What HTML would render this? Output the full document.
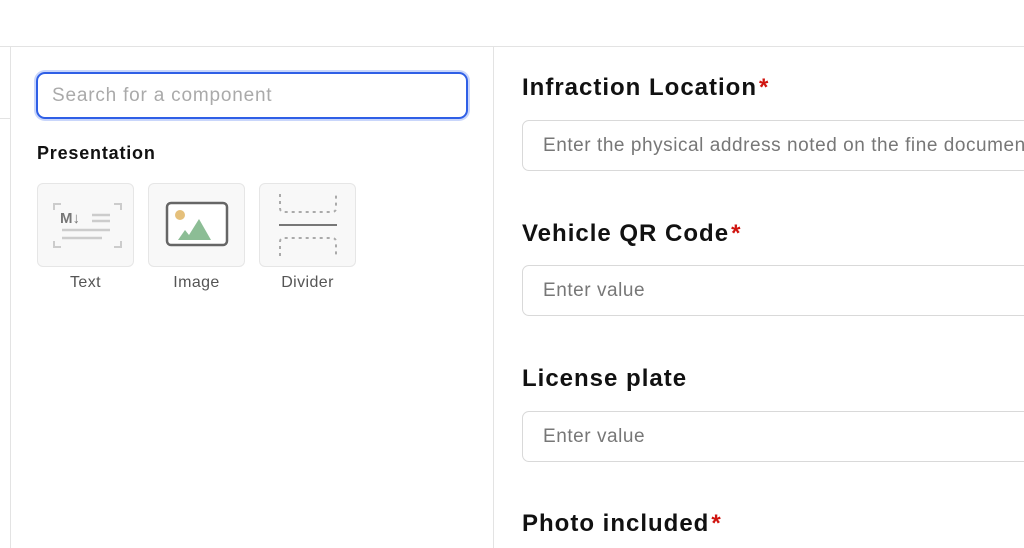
<!DOCTYPE html>
<html><head><style>
*{box-sizing:border-box;margin:0;padding:0}
body{width:1024px;height:548px;overflow:hidden;background:#fff;font-family:"Liberation Sans",Arial,sans-serif;position:relative}
.abs{position:absolute}
.lbl{position:absolute;left:522px;font-size:24px;font-weight:bold;color:#111;letter-spacing:1px}
.lbl span{color:#d0140f;margin-left:2px}
.inp{position:absolute;left:522px;width:560px;height:51px;border:1px solid #d9d9d9;border-radius:7px;font-size:19px;color:#777;padding:14px 0 0 20px;white-space:nowrap;letter-spacing:0.55px}
.tile{position:absolute;top:183px;width:97px;height:84px;background:#f8f8f8;border:1px solid #e6e6e6;border-radius:6px}
.tl{position:absolute;top:274px;width:97px;text-align:center;font-size:16px;color:#555;letter-spacing:0.4px}
</style></head><body>
<div class="abs" style="left:0;top:46px;width:1024px;height:1px;background:#e3e3e3"></div>
<div class="abs" style="left:10px;top:46px;width:1px;height:502px;background:#e3e3e3"></div>
<div class="abs" style="left:0;top:118px;width:10px;height:1px;background:#e3e3e3"></div>
<div class="abs" style="left:493px;top:46px;width:1px;height:502px;background:#e3e3e3"></div>
<div class="abs" style="left:36px;top:72px;width:432px;height:47px;border:2px solid #2f5fe6;border-radius:9px;box-shadow:0 0 0 2px #c9d6fb;font-size:19px;color:#aaa;padding:11px 0 0 14px;letter-spacing:0.8px">Search for a component</div>
<div class="abs" style="left:37px;top:143px;font-size:18px;font-weight:bold;color:#111;letter-spacing:0.8px">Presentation</div>
<div class="tile" style="left:37px"><svg width="95" height="82" viewBox="0 0 95 82" fill="none"><path d="M16 26v-6h7M76 20h7v6M16 57v6h7M76 63h7v-6" stroke="#ccc" stroke-width="2"/><text x="22" y="39" font-size="15" font-weight="bold" fill="#777" font-family="Liberation Sans">M↓</text><path d="M54 31h18M54 37h18M24 46h48M24 54h40" stroke="#ccc" stroke-width="2.5"/></svg></div>
<div class="tl" style="left:37px">Text</div>
<div class="tile" style="left:148px"><svg width="95" height="82" viewBox="0 0 95 82"><rect x="18" y="19" width="60" height="42" rx="4" fill="#fff" stroke="#666" stroke-width="2.5"/><circle cx="31" cy="31" r="5" fill="#e5c07b"/><path d="M29 56l7-10 4 5 10-16 12 21z" fill="#8cbd95"/></svg></div>
<div class="tl" style="left:148px">Image</div>
<div class="tile" style="left:259px"><svg width="95" height="82" viewBox="0 0 95 82" fill="none"><path d="M20 10v14q0 4 4 4h48q4 0 4-4v-14M20 72v-14q0-4 4-4h48q4 0 4 4v14" stroke="#aaa" stroke-width="2" stroke-dasharray="3 4"/><path d="M19 41h58" stroke="#777" stroke-width="2"/></svg></div>
<div class="tl" style="left:259px">Divider</div>

<div class="lbl" style="top:74px">Infraction Location<span>*</span></div>
<div class="inp" style="top:120px">Enter the physical address noted on the fine document</div>
<div class="lbl" style="top:220px">Vehicle QR Code<span>*</span></div>
<div class="inp" style="top:265px">Enter value</div>
<div class="lbl" style="top:365px">License plate</div>
<div class="inp" style="top:411px">Enter value</div>
<div class="lbl" style="top:510px">Photo included<span>*</span></div>
</body></html>
